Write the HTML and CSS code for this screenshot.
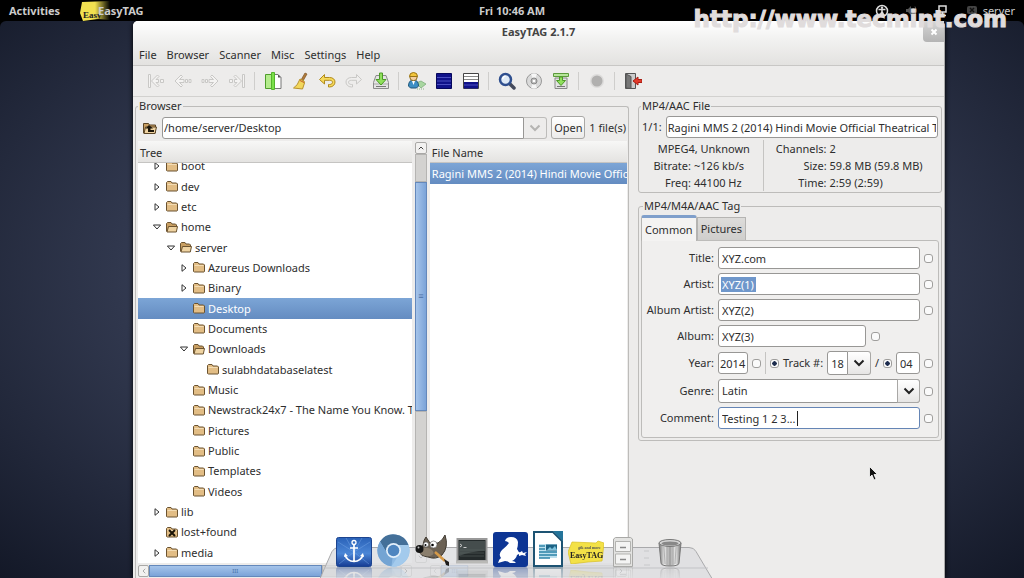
FILE: index.html
```html
<!DOCTYPE html>
<html lang="en">
<head>
    <meta charset="UTF-8">
    <meta name="viewport" content="width=device-width, initial-scale=1.0">
    <title>EasyTAG 2.1.7</title>
    <link rel="stylesheet" href="styles.css">
</head>
<body>

<!-- shared icons -->
<svg class="defs" aria-hidden="true">
    <symbol id="folder" viewBox="0 0 12 11">
        <path d="M.5 9.5v-8l1-1h3.500l1 1.500h4.500l1 1v6.500l-.5.500h-9.500z" fill="#e2bd85" stroke="#6b5330"/>
        <path d="M1.500 3.500h9" stroke="#f3dcb4"/>
    </symbol>
    <symbol id="folder-open" viewBox="0 0 12 11">
        <path d="M.5 9.500v-8l1-1h3.500l1 1.500h3.500l1 1v1.500" fill="#c99f62" stroke="#6b5330"/>
        <path d="M1 10l1.500-5.500h9l-1.200 5.500z" fill="#efd3a1" stroke="#6b5330"/>
    </symbol>
    <symbol id="closed" viewBox="0 0 8 8"><path d="M2 .7v6.600l4-3.300z" fill="#fff" stroke="#333"/></symbol>
    <symbol id="opened" viewBox="0 0 8 8"><path d="M.4 2h7.200l-3.600 4z" fill="#fff" stroke="#333"/></symbol>
    <symbol id="chevron" viewBox="0 0 12 8"><path d="M1.500 1.500l4.500 4.500 4.500-4.500" fill="none" stroke="currentColor" stroke-width="2"/></symbol>
    <symbol id="arrow-bar" viewBox="0 0 18 18">
        <path d="M1.500 2.500h2v13h-2zM4.500 9l6-6 1.500 1.500-3 3h2.500v3h-2.500l3 3-1.500 1.500zM13.500 7.500h3v3h-3z" fill="#f4f3f2" stroke="#c9c8c6"/>
    </symbol>
    <symbol id="arrow" viewBox="0 0 18 18">
        <path d="M1 9l6-6 1.500 1.500-3 3h4.500v3h-4.500l3 3-1.500 1.500zM11.500 7.500h2v3h-2zM15 7.500h2v3h-2z" fill="#f4f3f2" stroke="#c9c8c6"/>
    </symbol>
    <symbol id="undo" viewBox="0 0 18 18">
        <path d="M1.500 7.500l5-5v3h5c3.500 0 5.500 2 5.500 4.500s-2 5-5.500 5h-1v-2.500h1c2 0 3-1 3-2.200s-1-2-3-2h-5v3.700z" fill="currentColor" stroke="#b08a1e"/>
    </symbol>
</svg>

<header class="panel">
    <button class="activities">Activities</button>
    <button class="app-name">
        <svg width="30" height="20" viewBox="0 0 30 20">
            <defs><linearGradient id="fade"><stop offset=".5" stop-color="#f1e050"/><stop offset="1" stop-color="#f1e050" stop-opacity="0"/></linearGradient></defs>
            <path d="M2 1l28-1v19l-12-1-15 2-3-8z" fill="url(#fade)"/>
            <text x="3" y="17" class="tag-small">Easy</text>
        </svg>
        <span>EasyTAG</span>
    </button>
    <time class="clock">Fri 10:46 AM</time>
    <div class="tray">
        <svg width="14" height="14" viewBox="0 0 14 14"><circle cx="7" cy="7" r="5.500" fill="none" stroke="#ddd" stroke-width="1.500"/><circle cx="7" cy="3.700" r="1.200" fill="#ddd"/><path d="M3.500 5.500h7M7 5.500v2.500M7 7.500l-2 4M7 7.500l2 4" stroke="#ddd" stroke-width="1.500"/></svg>
        <svg width="14" height="14" viewBox="0 0 14 14"><path d="M1 5h2l3-3v9l-3-3h-2z" fill="#555"/><path d="M8 4q2 2.500 0 5M10 2.500q3 4 0 8" fill="none" stroke="#555"/></svg>
        <svg width="14" height="14" viewBox="0 0 14 14"><path d="M4 2h7v6h-7zM7.500 8v3M3 11.500h8" fill="none" stroke="#ddd" stroke-width="1.500"/></svg>
        <svg width="14" height="14" viewBox="0 0 14 14"><rect x="2" y="2" width="10" height="8" rx="2" fill="#444"/><path d="M5 4l4 4M9 4l-4 4" stroke="#111" stroke-width="1.500"/></svg>
        <span>server</span>
    </div>
</header>

<main class="desktop">
    <section class="window">
        <div class="titlebar">
            <h1>EasyTAG 2.1.7</h1>
            <button class="close" aria-label="Close"><svg width="8" height="8" viewBox="0 0 8 8"><path d="M1.500 1.500l5 5M6.500 1.500l-5 5" stroke="#fff" stroke-width="2"/></svg></button>
            <nav class="menu">
                <button>File</button>
                <button>Browser</button>
                <button>Scanner</button>
                <button>Misc</button>
                <button>Settings</button>
                <button>Help</button>
            </nav>
        </div>

        <div class="toolbar">
            <span class="grip"></span>
            <button aria-label="First"><svg><use href="#arrow-bar"/></svg></button>
            <button aria-label="Previous"><svg><use href="#arrow"/></svg></button>
            <button aria-label="Next"><svg class="flip"><use href="#arrow"/></svg></button>
            <button aria-label="Last"><svg class="flip"><use href="#arrow-bar"/></svg></button>
            <span class="sep"></span>
            <button aria-label="Scan files"><svg viewBox="0 0 18 18"><path d="M10 2.500h4l3 3v11h-7z" fill="#fff" stroke="#777"/><path d="M14 2.500v3h3z" fill="#555"/><path d="M1.500 2.500h6v14h-6z" fill="#b4ec8c" stroke="#4f9e2c"/><path d="M7.500.5h3v17h-3z" fill="#7be04a" stroke="#55b52c"/></svg></button>
            <button aria-label="Remove tags"><svg viewBox="0 0 18 18"><path d="M14 1l2 1-4 7-2-1z" fill="#b07a3a" stroke="#7d5427" stroke-width=".7"/><path d="M9 7l4 2 .5 2-2 6-9-1q4-2 6.500-9z" fill="#f2d75c" stroke="#b8912a"/><path d="M9 8.500l4 2" stroke="#c45a2a"/></svg></button>
            <button aria-label="Undo" class="undo"><svg><use href="#undo"/></svg></button>
            <button aria-label="Redo" class="redo"><svg class="flip" viewBox="0 0 18 18"><path d="M1.500 7.500l5-5v3h5c3.500 0 5.500 2 5.500 4.500s-2 5-5.500 5h-1v-2.500h1c2 0 3-1 3-2.200s-1-2-3-2h-5v3.700z" fill="#efeeed" stroke="#c9c8c6"/></svg></button>
            <button aria-label="Save"><svg viewBox="0 0 18 18"><path d="M4 3.500h10l2.500 7v6h-15v-6z" fill="#e4e4e4" stroke="#8b8b8b"/><path d="M2 12h14" stroke="#aaa"/><path d="M7.500 1h3v6.500h3.500l-5 5.500-5-5.500h3.500z" fill="#8fe05c" stroke="#4c9a26"/><path d="M4 14.500h10" stroke="#777"/></svg></button>
            <span class="sep"></span>
            <button aria-label="Artist view"><svg viewBox="0 0 18 18"><path d="M8 11l5-2 5 3-5 4z" fill="#a8d6a0" stroke="#77a873" stroke-width=".7"/><path d="M.5 14q0-6 5-6t5 6l-2 2h-6z" fill="#3c8fc4" stroke="#1f5578"/><circle cx="5.500" cy="5" r="3.700" fill="#f4cfa0" stroke="#8c6a1c"/><path d="M1.500 4.500q0-4 4-4t4 4z" fill="#f2c53b" stroke="#9a7415"/><path d="M4 9l1.500 4 1.500-4z" fill="#fff"/><path d="M9 17h8" stroke="#8ab583" stroke-dasharray="1 1"/></svg></button>
            <button aria-label="Invert selection"><svg viewBox="0 0 18 18"><path d="M1.500 1.500h15v15h-15z" fill="#10128a" stroke="#06075c"/><path d="M2 5.500h14M2 9h14M2 12.500h14" stroke="#4a4ec0"/></svg></button>
            <button aria-label="Select half"><svg viewBox="0 0 18 18"><path d="M1.500 1.500h15v15h-15z" fill="#fff" stroke="#444"/><path d="M2 4.500h14M2 7.500h14" stroke="#888"/><path d="M2 10h14v6.500h-14z" fill="#10128a"/><path d="M2 13h14" stroke="#4a4ec0"/></svg></button>
            <span class="sep"></span>
            <button aria-label="Find"><svg viewBox="0 0 18 18"><path d="M12 12l4 4" stroke="#444a5c" stroke-width="3.500" stroke-linecap="round"/><circle cx="7.500" cy="7.500" r="5.500" fill="#dfeaf6" stroke="#2f4f8f" stroke-width="2.500"/><path d="M4.500 7q.5-2.500 3-3" fill="none" stroke="#fff" stroke-width="1.500"/></svg></button>
            <button aria-label="CDDB"><svg viewBox="0 0 18 18"><circle cx="9" cy="9" r="7.500" fill="#dadada" stroke="#999"/><path d="M9 9l-3-7q3-1.500 6 0zM9 9l3 7q-3 1.500-6 0z" fill="#f6f6f6"/><circle cx="9" cy="9" r="3" fill="#bbb" stroke="#888"/><circle cx="9" cy="9" r="1.300" fill="#fff"/></svg></button>
            <button aria-label="Load tags"><svg viewBox="0 0 18 18"><path d="M3 6h12v10.500h-12z" fill="#e2e2e2" stroke="#888"/><path d="M1.500 1.500h15v3h-15z" fill="#b6e59a" stroke="#5c9a3c"/><path d="M7.500 5h3v3.500h3l-4.500 5-4.500-5h3z" fill="#8fe05c" stroke="#4c9a26"/><path d="M5 14.500h8" stroke="#777"/></svg></button>
            <span class="sep"></span>
            <button aria-label="Stop"><svg viewBox="0 0 18 18"><circle cx="9" cy="9" r="7" fill="#dddcdb"/><circle cx="9" cy="9" r="5.500" fill="#b1b0af"/></svg></button>
            <span class="sep"></span>
            <button aria-label="Quit"><svg viewBox="0 0 18 18"><path d="M1.500 1.500h10v15h-10z" fill="#ccc" stroke="#555"/><path d="M2 2l5 2.500v12l-5-.5z" fill="#777" stroke="#555"/><path d="M9 9l5-4v2.500h4v3h-4v2.500z" fill="#e33a2b" stroke="#a81f15"/></svg></button>
        </div>

        <div class="content">
            <fieldset class="browser">
                <legend>Browser</legend>
                <div class="path-row">
                    <button class="up" aria-label="Parent folder"><svg width="14" height="12" viewBox="0 0 14 12"><path d="M.5 11v-9.500h5l1 1.500h6v8z" fill="#c99f62" stroke="#5b4526"/><path d="M1 11.500l1.500-6.500h11l-1.500 6.500z" fill="#efd3a1" stroke="#5b4526"/><path d="M6 3l4 3.500h-2.500v1.500h3.500v2h-6v-3.500h-2.500z" fill="#1a1408"/></svg></button>
                    <div class="combo">
                        <input type="text" aria-label="Path" value="/home/server/Desktop">
                        <button class="drop faded" aria-label="Recent paths"><svg><use href="#chevron"/></svg></button>
                    </div>
                    <button class="open">Open</button>
                    <span class="count">1 file(s)</span>
                </div>

                <div class="panes">
                    <div class="tree">
                        <div class="head">Tree</div>
                        <div class="view">
                            <ul>
                                <li><svg class="exp"><use href="#closed"/></svg><svg class="dir"><use href="#folder"/></svg>boot</li>
                                <li><svg class="exp"><use href="#closed"/></svg><svg class="dir"><use href="#folder"/></svg>dev</li>
                                <li><svg class="exp"><use href="#closed"/></svg><svg class="dir"><use href="#folder"/></svg>etc</li>
                                <li><svg class="exp"><use href="#opened"/></svg><svg class="dir"><use href="#folder-open"/></svg>home</li>
                                <li class="l2"><svg class="exp"><use href="#opened"/></svg><svg class="dir"><use href="#folder-open"/></svg>server</li>
                                <li class="l3"><svg class="exp"><use href="#closed"/></svg><svg class="dir"><use href="#folder"/></svg>Azureus Downloads</li>
                                <li class="l3"><svg class="exp"><use href="#closed"/></svg><svg class="dir"><use href="#folder"/></svg>Binary</li>
                                <li class="l3 selected"><svg class="exp"></svg><svg class="dir"><use href="#folder"/></svg>Desktop</li>
                                <li class="l3"><svg class="exp"></svg><svg class="dir"><use href="#folder"/></svg>Documents</li>
                                <li class="l3"><svg class="exp"><use href="#opened"/></svg><svg class="dir"><use href="#folder-open"/></svg>Downloads</li>
                                <li class="l4"><svg class="exp"></svg><svg class="dir"><use href="#folder"/></svg>sulabhdatabaselatest</li>
                                <li class="l3"><svg class="exp"></svg><svg class="dir"><use href="#folder"/></svg>Music</li>
                                <li class="l3"><svg class="exp"></svg><svg class="dir"><use href="#folder"/></svg>Newstrack24x7 - The Name You Know. T</li>
                                <li class="l3"><svg class="exp"></svg><svg class="dir"><use href="#folder"/></svg>Pictures</li>
                                <li class="l3"><svg class="exp"></svg><svg class="dir"><use href="#folder"/></svg>Public</li>
                                <li class="l3"><svg class="exp"></svg><svg class="dir"><use href="#folder"/></svg>Templates</li>
                                <li class="l3"><svg class="exp"></svg><svg class="dir"><use href="#folder"/></svg>Videos</li>
                                <li><svg class="exp"><use href="#closed"/></svg><svg class="dir"><use href="#folder"/></svg>lib</li>
                                <li><svg class="exp"></svg><svg class="dir" viewBox="0 0 12 11"><use href="#folder"/><path d="M3 3l6 6M9 3l-6 6" stroke="#1a1408" stroke-width="2"/></svg>lost+found</li>
                                <li><svg class="exp"><use href="#closed"/></svg><svg class="dir"><use href="#folder"/></svg>media</li>
                            </ul>
                        </div>
                        <div class="hbar">
                            <button class="step left" aria-label="Scroll left"><svg><use href="#chevron"/></svg></button>
                            <span class="thumb">III</span>
                            <span class="trough"></span>
                            <button class="step right" aria-label="Scroll right"><svg><use href="#chevron"/></svg></button>
                        </div>
                    </div>
                    <div class="vbar">
                        <button class="step top" aria-label="Scroll up"><svg><use href="#chevron"/></svg></button>
                        <span class="trough"></span>
                        <span class="thumb">≡</span>
                        <span class="trough rest"></span>
                        <button class="step" aria-label="Scroll down"><svg><use href="#chevron"/></svg></button>
                    </div>
                    <div class="files">
                        <div class="head">File Name</div>
                        <div class="view">
                            <ul>
                                <li class="selected">Ragini MMS 2 (2014) Hindi Movie Official</li>
                            </ul>
                        </div>
                        <div class="hbar short">
                            <button class="step left" aria-label="Scroll left"><svg><use href="#chevron"/></svg></button>
                            <span class="thumb">III</span>
                            <span class="trough"></span>
                            <button class="step right" aria-label="Scroll right"><svg><use href="#chevron"/></svg></button>
                        </div>
                    </div>
                </div>
            </fieldset>

            <div class="side">
                <fieldset class="file-info">
                    <legend>MP4/AAC File</legend>
                    <div class="name-row">
                        <label for="filename">1/1:</label>
                        <input type="text" id="filename" value="Ragini MMS 2 (2014) Hindi Movie Official Theatrical T">
                    </div>
                    <div class="facts">
                        <div class="left-facts">
                            <span class="wide">MPEG4, Unknown</span>
                            <span class="key">Bitrate:</span><span>~126 kb/s</span>
                            <span class="key">Freq:</span><span>44100 Hz</span>
                        </div>
                        <div class="right-facts">
                            <span class="key">Channels:</span><span>2</span>
                            <span class="key">Size:</span><span>59.8 MB (59.8 MB)</span>
                            <span class="key">Time:</span><span>2:59 (2:59)</span>
                        </div>
                    </div>
                </fieldset>

                <fieldset class="tag">
                    <legend>MP4/M4A/AAC Tag</legend>
                    <div class="tabs">
                        <button class="tab active">Common</button>
                        <button class="tab">Pictures</button>
                    </div>
                    <form class="form">
                        <label for="title">Title:</label>
                        <input type="text" id="title" value="XYZ.com">
                        <input type="checkbox" aria-label="Tag all with this title">

                        <label for="artist">Artist:</label>
                        <input type="text" id="artist" class="marked" value="XYZ(1)">
                        <input type="checkbox" aria-label="Tag all with this artist">

                        <label for="albumArtist">Album Artist:</label>
                        <input type="text" id="albumArtist" value="XYZ(2)">
                        <input type="checkbox" aria-label="Tag all with this album artist">

                        <label for="album">Album:</label>
                        <div class="line album">
                            <input type="text" id="album" value="XYZ(3)">
                            <input type="checkbox" aria-label="Tag all with this album">
                        </div>

                        <label for="year">Year:</label>
                        <div class="line year">
                            <input type="text" id="year" value="2014">
                            <input type="checkbox" aria-label="Tag all with this year">
                            <span class="rule"></span>
                            <input type="checkbox" class="seq" aria-label="Number tracks">
                            <label for="track">Track #:</label>
                            <div class="combo">
                                <input type="text" id="track" value="18">
                                <button type="button" class="drop" aria-label="Pick track"><svg><use href="#chevron"/></svg></button>
                            </div>
                            <span>/</span>
                            <input type="checkbox" class="seq" aria-label="Count tracks">
                            <input type="text" class="total" aria-label="Track total" value="04">
                        </div>
                        <input type="checkbox" aria-label="Tag all with this track">

                        <label for="genre">Genre:</label>
                        <div class="genre">
                            <select id="genre"><option>Latin</option></select>
                            <span class="drop"><svg><use href="#chevron"/></svg></span>
                        </div>
                        <input type="checkbox" aria-label="Tag all with this genre">

                        <label for="comment">Comment:</label>
                        <input type="text" id="comment" class="current" value="Testing 1 2 3...">
                        <input type="checkbox" aria-label="Tag all with this comment">
                    </form>
                </fieldset>
            </div>
        </div>
    </section>
</main>

<nav class="dock">
    <svg class="shelf" viewBox="0 0 392 31" preserveAspectRatio="none"><path d="M0 31.500l12-27q2-4 7-4h350q5 0 7 4l16 27z" fill="#dcdde0" fill-opacity=".8" stroke="#a9a9ab"/><path d="M4 21h384" stroke="#c2c3c6"/></svg>
    <button aria-label="Docky"><svg width="36" height="30" viewBox="0 0 36 30"><defs><linearGradient id="sea" x2="0" y2="1"><stop stop-color="#2a62b8"/><stop offset=".55" stop-color="#4b86d6"/><stop offset="1" stop-color="#163c94"/></linearGradient></defs><rect x=".5" y=".5" width="35" height="29" rx="2" fill="url(#sea)" stroke="#1c448f"/><path d="M18 15L2 5M18 15L34 5M18 15L3 27M18 15l15 12M18 15L10 1M18 15l8-14" stroke="#7fb0ee" stroke-opacity=".4"/><path d="M18 7v17M14 11h8M9 18q2 6 9 6.500q7-.5 9-6.500" fill="none" stroke="#fff" stroke-width="1.700"/><circle cx="18" cy="5.500" r="2" fill="none" stroke="#fff" stroke-width="1.300"/><path d="M8 20l1-4 3 3zM28 20l-1-4-3 3z" fill="#fff"/></svg></button>
    <button aria-label="Chromium"><svg width="33" height="33" viewBox="0 0 33 33"><circle cx="16.500" cy="16.500" r="16" fill="#8fbbe4"/><path d="M3 7.500a16 16 0 0 1 28.500 3.500h-15l-6 9z" fill="#447099"/><path d="M3 7.500l7.500 12.500 5 4-1 8.300a16 16 0 0 1-11.500-24.800z" fill="#74a4d3"/><path d="M31.500 11a16 16 0 0 1-17 21.500l8-13-2-8.500z" fill="#a3caec"/><circle cx="16.500" cy="16.500" r="7.500" fill="#e4f0fb"/><circle cx="16.500" cy="16.500" r="5.800" fill="#4f86c0"/></svg></button>
    <button aria-label="GIMP"><svg width="36" height="32" viewBox="0 0 36 32"><path d="M8 10q1-6 3-8l4 6h8q5-3 7-8q4 12-3 20q-6 5-14 2q-8-1-9-6z" fill="#6b6154" stroke="#3e382f"/><path d="M5 14q7-3 12 1q4 4-2 6q-7 1-11-4z" fill="#8a7e6d"/><ellipse cx="4.500" cy="14" rx="4" ry="4" fill="#151515"/><circle cx="3.500" cy="12.500" r="1" fill="#bbb"/><circle cx="11" cy="9.500" r="2.500" fill="#fff" stroke="#555" stroke-width=".6"/><circle cx="18.500" cy="9.500" r="3.500" fill="#fff" stroke="#555" stroke-width=".6"/><circle cx="10.500" cy="10" r="1"/><circle cx="17.500" cy="10" r="1.300"/><path d="M20 17l10 9" stroke="#d69a48" stroke-width="2.500"/><path d="M29 24l5 3v4l-3-1z" fill="#1d1d1d"/></svg></button>
    <button class="terminal" aria-label="Terminal"><svg width="32" height="26" viewBox="0 0 32 26"><path d="M1.500 1h29v22h-29z" fill="#242a2b" stroke="#999" stroke-width="2"/><path d="M3 3h26v10q-13 0-26 5z" fill="#454d4d"/><path d="M4 6l2 1.500-2 1.500M7.500 9.500h3" stroke="#ccc" fill="none"/><path d="M4 12h24M4 15h24M4 18h24" stroke="#59625f" stroke-width=".6"/><path d="M0 22.500h32v3h-32z" fill="#b9b9b6"/></svg></button>
    <button aria-label="Bluefish"><svg width="35" height="35" viewBox="0 0 35 35"><rect width="35" height="35" rx="3" fill="#0d3594"/><path d="M12 9q1-4 6-4q6 0 7 5q0 4-1 7q1 3 4 4l-4 2q-1 4-5 6q3 0 4 2h-6q-2-2-5-2l-7 2q1-4 3-5q-3-4 1-8q5-4 7-7q-2-2-4-2z" fill="#fff"/><path d="M26 21l3-2 1 2 4-1-2 2 1 2-4-1-3 1z" fill="#fff"/></svg></button>
    <button aria-label="Writer"><svg width="30" height="36" viewBox="0 0 30 36"><path d="M1 1h19l9 9v25h-28z" fill="#fff" stroke="#1d5373" stroke-width="2"/><path d="M20 0h10v10z" fill="#24749a"/><path d="M6 13h18v14h-18z" fill="#bde0ee"/><path d="M6 15h6M6 18h6M6 21h18M6 24h18M6 27h11" stroke="#2d83a8" stroke-width="1.500"/><path d="M13 13.500h11v6h-11z" fill="#1c6385"/><path d="M14 19l3-3 2 2 3-3 2 4z" fill="#7fc2dc"/></svg></button>
    <button class="easytag" aria-label="EasyTAG"><svg width="36" height="24" viewBox="0 0 36 24"><path d="M4 2l24 1 2-2 6 2-2 18-14 1-17 2-3-12z" fill="#f3e147" stroke="#d9bf22" stroke-width=".7"/><text x="10" y="9" class="tag-tiny">gtk and more</text><text x="2" y="18" class="tag-name">EasyTAG</text></svg></button>
    <button class="cabinet" aria-label="Files"><svg width="22" height="30" viewBox="0 0 22 30"><path d="M1.500 2l2-1.500h15l2 1.500v27.500h-19z" fill="#e3e3e1" stroke="#a9a9a7"/><path d="M3.500 4.500h15v10h-15zM3.500 17h15v10h-15z" fill="#f4f4f3" stroke="#b3b3b0"/><path d="M8 10.500h6M8 22.500h6" stroke="#888" stroke-width="1.500"/></svg></button>
    <svg class="divider" width="6" height="18" viewBox="0 0 6 18"><path d="M0 2h5M0 9h5M0 16h6" stroke="#777"/></svg>
    <button aria-label="Trash"><svg width="24" height="28" viewBox="0 0 24 28"><defs><linearGradient id="tin"><stop stop-color="#777"/><stop offset=".25" stop-color="#e5e5e5"/><stop offset=".5" stop-color="#aaa"/><stop offset=".75" stop-color="#e8e8e8"/><stop offset="1" stop-color="#777"/></linearGradient></defs><path d="M1 4l2 20q0 3 9 3t9-3l2-20z" fill="url(#tin)" stroke="#777"/><path d="M6 8l1 17M9 8v18M12 8v18M15 8v18M18 8l-1 17" stroke="#8d8d8d" stroke-width=".6"/><ellipse cx="12" cy="4" rx="11" ry="3.500" fill="#d5d5d5" stroke="#777"/><ellipse cx="12" cy="4.500" rx="8.500" ry="2" fill="#888"/></svg></button>
</nav>

<svg class="cursor" width="9" height="15" viewBox="0 0 9 15"><path d="M.5.5v11l2.500-2.500 2 5 2-1-2-4.500h3.500z" fill="#111" stroke="#fff" stroke-width=".8"/></svg>
<div class="watermark">http://www.tecmint.com</div>

</body>
</html>
```
FILE: styles.css
```css
* {
    box-sizing: border-box;
}
body {
    margin: 0;
    height: 100vh;
    overflow: hidden;
    display: flex;
    flex-direction: column;
    position: relative;
    background: #000;
    font-family: "Noto Sans", "Open Sans", sans-serif;
    font-size: 11px;
    line-height: 14px;
    color: #2e2e2e;
}
button, input, select {
    font: inherit;
    color: inherit;
    margin: 0;
}
button {
    padding: 0;
    border: none;
    background: none;
}
svg {
    display: block;
    flex: none;
}
ul {
    list-style: none;
    margin: 0;
    padding: 0;
}
.defs {
    position: absolute;
    width: 0;
    height: 0;
}

/* top panel */
.panel {
    flex: none;
    height: 21px;
    display: grid;
    grid-template-columns: 80px 1fr auto 1fr;
    align-items: center;
    color: #ccc;
    font-weight: bold;
}
.activities {
    padding-left: 9px;
    text-align: left;
}
.app-name {
    display: flex;
    align-items: center;
}
.app-name span {
    margin-left: -12px;
}
.tag-small {
    font: bold 9px "Liberation Serif", serif;
    fill: #222;
}
.tag-name {
    font: bold 8px "Liberation Serif", serif;
    fill: #222;
}
.tag-tiny {
    font: bold 4px "Liberation Serif", serif;
    fill: #555;
}
.clock {
    padding-right: 80px;
}
.tray {
    display: flex;
    align-items: center;
    justify-content: flex-end;
    gap: 16px;
    padding-right: 9px;
    font-weight: normal;
}
.tray span {
    margin-left: -12px;
}

/* desktop and window */
.desktop {
    flex: 1;
    min-height: 0;
    display: flex;
    padding: 0 79px 0 133px;
    border-radius: 6px 6px 0 0;
    background: radial-gradient(ellipse at 50% 45%, #5a6484 0%, #30374d 55%, #131827 100%);
}
.window {
    flex: 1;
    min-width: 0;
    display: flex;
    flex-direction: column;
    background: #edeceb;
    border-radius: 5px 5px 0 0;
    border-right: 1px solid #aaa;
    box-shadow: 0 0 5px #000;
}
.titlebar {
    position: relative;
    flex: none;
    border-radius: 5px 5px 0 0;
    border-bottom: 1px solid #c8c7c5;
    background: linear-gradient(#fff, #f2f2f1 40%, #e3e2e0);
}
.titlebar h1 {
    margin: 0;
    padding: 3px 0 9px;
    font-size: 11px;
    line-height: 15px;
    text-align: center;
    color: #444;
}
.close {
    position: absolute;
    top: 0;
    right: 0;
    width: 21px;
    height: 21px;
    display: grid;
    place-items: center;
    border-radius: 0 0 0 4px;
    background: linear-gradient(#d5d5d5, #b4b4b4);
}
.menu {
    display: flex;
    gap: 10px;
    padding: 0 6px 3px;
}
.toolbar {
    flex: none;
    height: 31px;
    display: flex;
    align-items: center;
    border-bottom: 1px solid #d2d1cf;
}
.grip {
    width: 4px;
    height: 14px;
    margin: 0 3px 0 2px;
    background: radial-gradient(#c5c4c2 30%, transparent 40%) 0 0 / 2px 2px;
}
.toolbar button {
    width: 27px;
    display: grid;
    place-items: center;
}
.toolbar svg {
    width: 18px;
    height: 18px;
}
.toolbar .sep {
    width: 1px;
    height: 18px;
    margin: 0 4px;
    background: #cfcecc;
}
.undo {
    color: #f6d95a;
}
.flip {
    transform: scaleX(-1);
}

/* content */
.content {
    flex: 1;
    min-height: 0;
    display: grid;
    grid-template-columns: 494fr 304fr;
    gap: 9px;
    padding: 2px 2px 0;
}
fieldset {
    min-width: 0;
    margin: 0;
    padding: 0;
    border: 1px solid #bdbcba;
    border-radius: 3px;
}
legend {
    margin-left: 2px;
    padding: 0 1px;
}
.browser {
    display: flex;
    flex-direction: column;
    border-bottom: none;
    border-radius: 3px 3px 0 0;
    min-height: 0;
}
.path-row {
    display: flex;
    align-items: center;
    gap: 4px;
    padding: 3px 2px 2px 7px;
    height: 28px;
    flex: none;
}
input[type="text"], select {
    min-width: 0;
    height: 22px;
    padding: 0 3px;
    border: 1px solid #989795;
    border-radius: 3px;
    background-color: #fff;
    outline: none;
}
.path-row input[type="text"], .name-row input[type="text"] {
    padding: 0 1px;
}
.combo {
    flex: 1;
    min-width: 0;
    display: flex;
}
.combo input[type="text"] {
    flex: 1;
    border-radius: 3px 0 0 3px;
}
.path-row .combo {
    margin-left: 1px;
}
.drop {
    width: 23px;
    display: grid;
    place-items: center;
    border: 1px solid #a9a8a6;
    border-left: none;
    border-radius: 0 3px 3px 0;
    background: linear-gradient(#fff, #e6e5e4);
    color: #222;
}
.drop svg {
    width: 12px;
    height: 8px;
}
.drop.faded {
    color: #b5b4b2;
    background: #edeceb;
    border-color: #bdbcba;
}
.open {
    width: 34px;
    height: 23px;
    border: 1px solid #a9a8a6;
    border-radius: 3px;
    background: linear-gradient(#fff, #ecebea);
}
.count {
    white-space: nowrap;
}
.panes {
    flex: 1;
    min-height: 0;
    display: grid;
    grid-template-columns: 275fr 12px 198fr;
    column-gap: 3px;
    padding: 0 1px 0 2px;
}
.tree, .files {
    min-width: 0;
    min-height: 0;
    display: flex;
    flex-direction: column;
}
.head {
    flex: none;
    height: 22px;
    padding: 5px 2px 0;
    border-bottom: 1px solid #c5c4c2;
    background: linear-gradient(#f7f7f6, #e4e3e1);
}
.view {
    flex: 1;
    min-height: 0;
    display: flex;
    overflow: hidden;
    background: #fff;
}
.view ul {
    flex: 1;
    min-width: 0;
}
.view li {
    display: flex;
    align-items: center;
    white-space: nowrap;
    overflow: hidden;
}
.tree ul {
    display: grid;
    grid-auto-rows: 1fr;
    margin-top: -7px;
}
.tree li {
    padding-left: 15px;
}
.tree .l2 {
    padding-left: 29px;
}
.tree .l3 {
    padding-left: 42px;
}
.tree .l4 {
    padding-left: 56px;
}
.exp {
    width: 8px;
    height: 8px;
    margin-right: 5px;
}
.dir {
    width: 12px;
    height: 11px;
    margin-right: 3px;
}
.files li {
    height: 21px;
    padding-left: 2px;
}
.view .selected {
    color: #fff;
    background: linear-gradient(#7ca5d6, #648cc1);
}

/* scrollbars */
.hbar {
    flex: none;
    display: flex;
    height: 12px;
    margin: 2px 0 1px;
}
.step {
    flex: none;
    width: 11px;
    display: grid;
    place-items: center;
    border: 1px solid #a9a8a6;
    border-radius: 2px;
    background: #f2f1f0;
    color: #444;
}
.step svg {
    width: 6px;
    height: 4px;
}
.left {
    color: #aaa;
}
.left svg {
    transform: rotate(90deg);
}
.right svg {
    transform: rotate(-90deg);
}
.top svg {
    transform: rotate(180deg);
}
.thumb {
    display: grid;
    place-items: center;
    border: 1px solid #6488bb;
    background: linear-gradient(#a5c4ea, #7ba3d8);
    color: #4a6fa5;
    font-size: 6px;
    line-height: 6px;
}
.trough {
    flex: 1;
    border: 1px solid #b5b4b2;
    background: #d3d2d0;
}
.hbar .thumb {
    flex: 0 0 63%;
}
.short .thumb {
    flex-basis: 14%;
}
.vbar {
    display: flex;
    flex-direction: column;
    padding: 1px 0 15px;
}
.vbar .step {
    width: auto;
    height: 12px;
}
.vbar .trough {
    flex: 26;
}
.vbar .thumb {
    flex: 231;
    font-size: 9px;
    background: linear-gradient(90deg, #a5c4ea, #7ba3d8);
}
.vbar .rest {
    flex: 140;
}

/* right side */
.side {
    min-width: 0;
}
.name-row {
    display: flex;
    align-items: center;
    gap: 4px;
    padding: 3px 3px 2px 3px;
}
.name-row input[type="text"] {
    flex: 1;
}
.facts {
    display: grid;
    grid-template-columns: 125fr 178fr;
    padding-bottom: 1px;
    line-height: 17px;
}
.left-facts, .right-facts {
    display: grid;
    column-gap: 3px;
    white-space: nowrap;
}
.left-facts {
    grid-template-columns: 52px 1fr;
    border-right: 1px solid #c5c4c2;
}
.right-facts {
    grid-template-columns: 63px 1fr;
}
.key {
    text-align: right;
}
.wide {
    grid-column: 1 / 3;
    padding-left: 6px;
    text-align: center;
}
.tag {
    margin-top: 6px;
    padding: 0 2px 2px;
}
.tabs {
    display: flex;
    align-items: flex-end;
    padding-top: 2px;
}
.tab {
    height: 23px;
    padding: 0 3px;
    border: 1px solid #b5b4b2;
    border-bottom: none;
    background: linear-gradient(#dddcda, #cfcecc);
}
.tab.active {
    height: 26px;
    margin-bottom: -1px;
    border-top: 3px solid #7f9fcb;
    border-radius: 3px 3px 0 0;
    background: #f4f3f2;
    z-index: 1;
}
.form {
    display: grid;
    grid-template-columns: 72px minmax(0, 1fr) 9px;
    gap: 4px;
    align-items: center;
    padding: 6px 5px 8px 0;
    border: 1px solid #bdbcba;
    border-radius: 0 3px 3px 3px;
    background: #f0efee;
}
.form label {
    text-align: right;
    white-space: nowrap;
}
.form > input[type="text"] {
    width: 100%;
}
.form input[type="checkbox"] {
    appearance: none;
    flex: none;
    width: 9px;
    height: 9px;
    border: 1px solid #9f9e9c;
    border-radius: 3px;
    background: #fafafa;
}
.form .seq[type="checkbox"] {
    background: radial-gradient(circle, #1c2b4d 40%, #fafafa 50%);
}
.line {
    display: flex;
    align-items: center;
    gap: 4px;
}
.album {
    grid-column: 2 / 4;
    gap: 5px;
}
.album input[type="text"] {
    flex: 0 0 69%;
}
.year {
    height: 24px;
}
#year {
    flex: none;
    width: 30px;
    padding: 0 1px;
}
.year .combo {
    flex: 1 1 38px;
    height: 24px;
}
#track {
    height: 24px;
    padding-right: 0;
}
.year .drop {
    flex: none;
}
.total {
    flex: none;
    width: 24px;
}
.rule {
    width: 1px;
    height: 22px;
    background: #c5c4c2;
}
.marked {
    color: #fff;
    background: #fff linear-gradient(#6f97cb, #6f97cb) 2px 3px / 35px 15px no-repeat;
}
.form .current {
    border-color: #6585b5;
    background: #fff linear-gradient(#222, #222) 78px 3px / 1px 15px no-repeat;
}
.genre {
    display: grid;
    height: 24px;
}
.genre > * {
    grid-area: 1 / 1;
}
.genre select {
    appearance: none;
    width: 100%;
    height: 24px;
}
.genre .drop {
    justify-self: end;
    border-left: 1px solid #a9a8a6;
    pointer-events: none;
}

/* dock */
.dock {
    position: absolute;
    left: 320px;
    bottom: 0;
    width: 392px;
    display: flex;
    align-items: flex-end;
    gap: 5px;
    padding: 0 0 11px 16px;
}
.dock button {
    -webkit-box-reflect: below 0 linear-gradient(transparent 50%, rgba(0, 0, 0, 0.35));
}
.dock .terminal, .dock .easytag {
    padding-bottom: 3px;
}
.cabinet {
    margin-left: 3px;
}
.divider {
    margin: 0 3px 0 5px;
}
.shelf {
    position: absolute;
    left: 0;
    bottom: 0;
    width: 100%;
    height: 31px;
}
.cursor {
    position: absolute;
    left: 869px;
    top: 466px;
}
.watermark {
    position: absolute;
    top: 6px;
    right: 17px;
    font: bold 23px/26px "DejaVu Sans", sans-serif;
    color: #e0dcdc;
    -webkit-text-stroke: 1px #e0dcdc;
}
```
